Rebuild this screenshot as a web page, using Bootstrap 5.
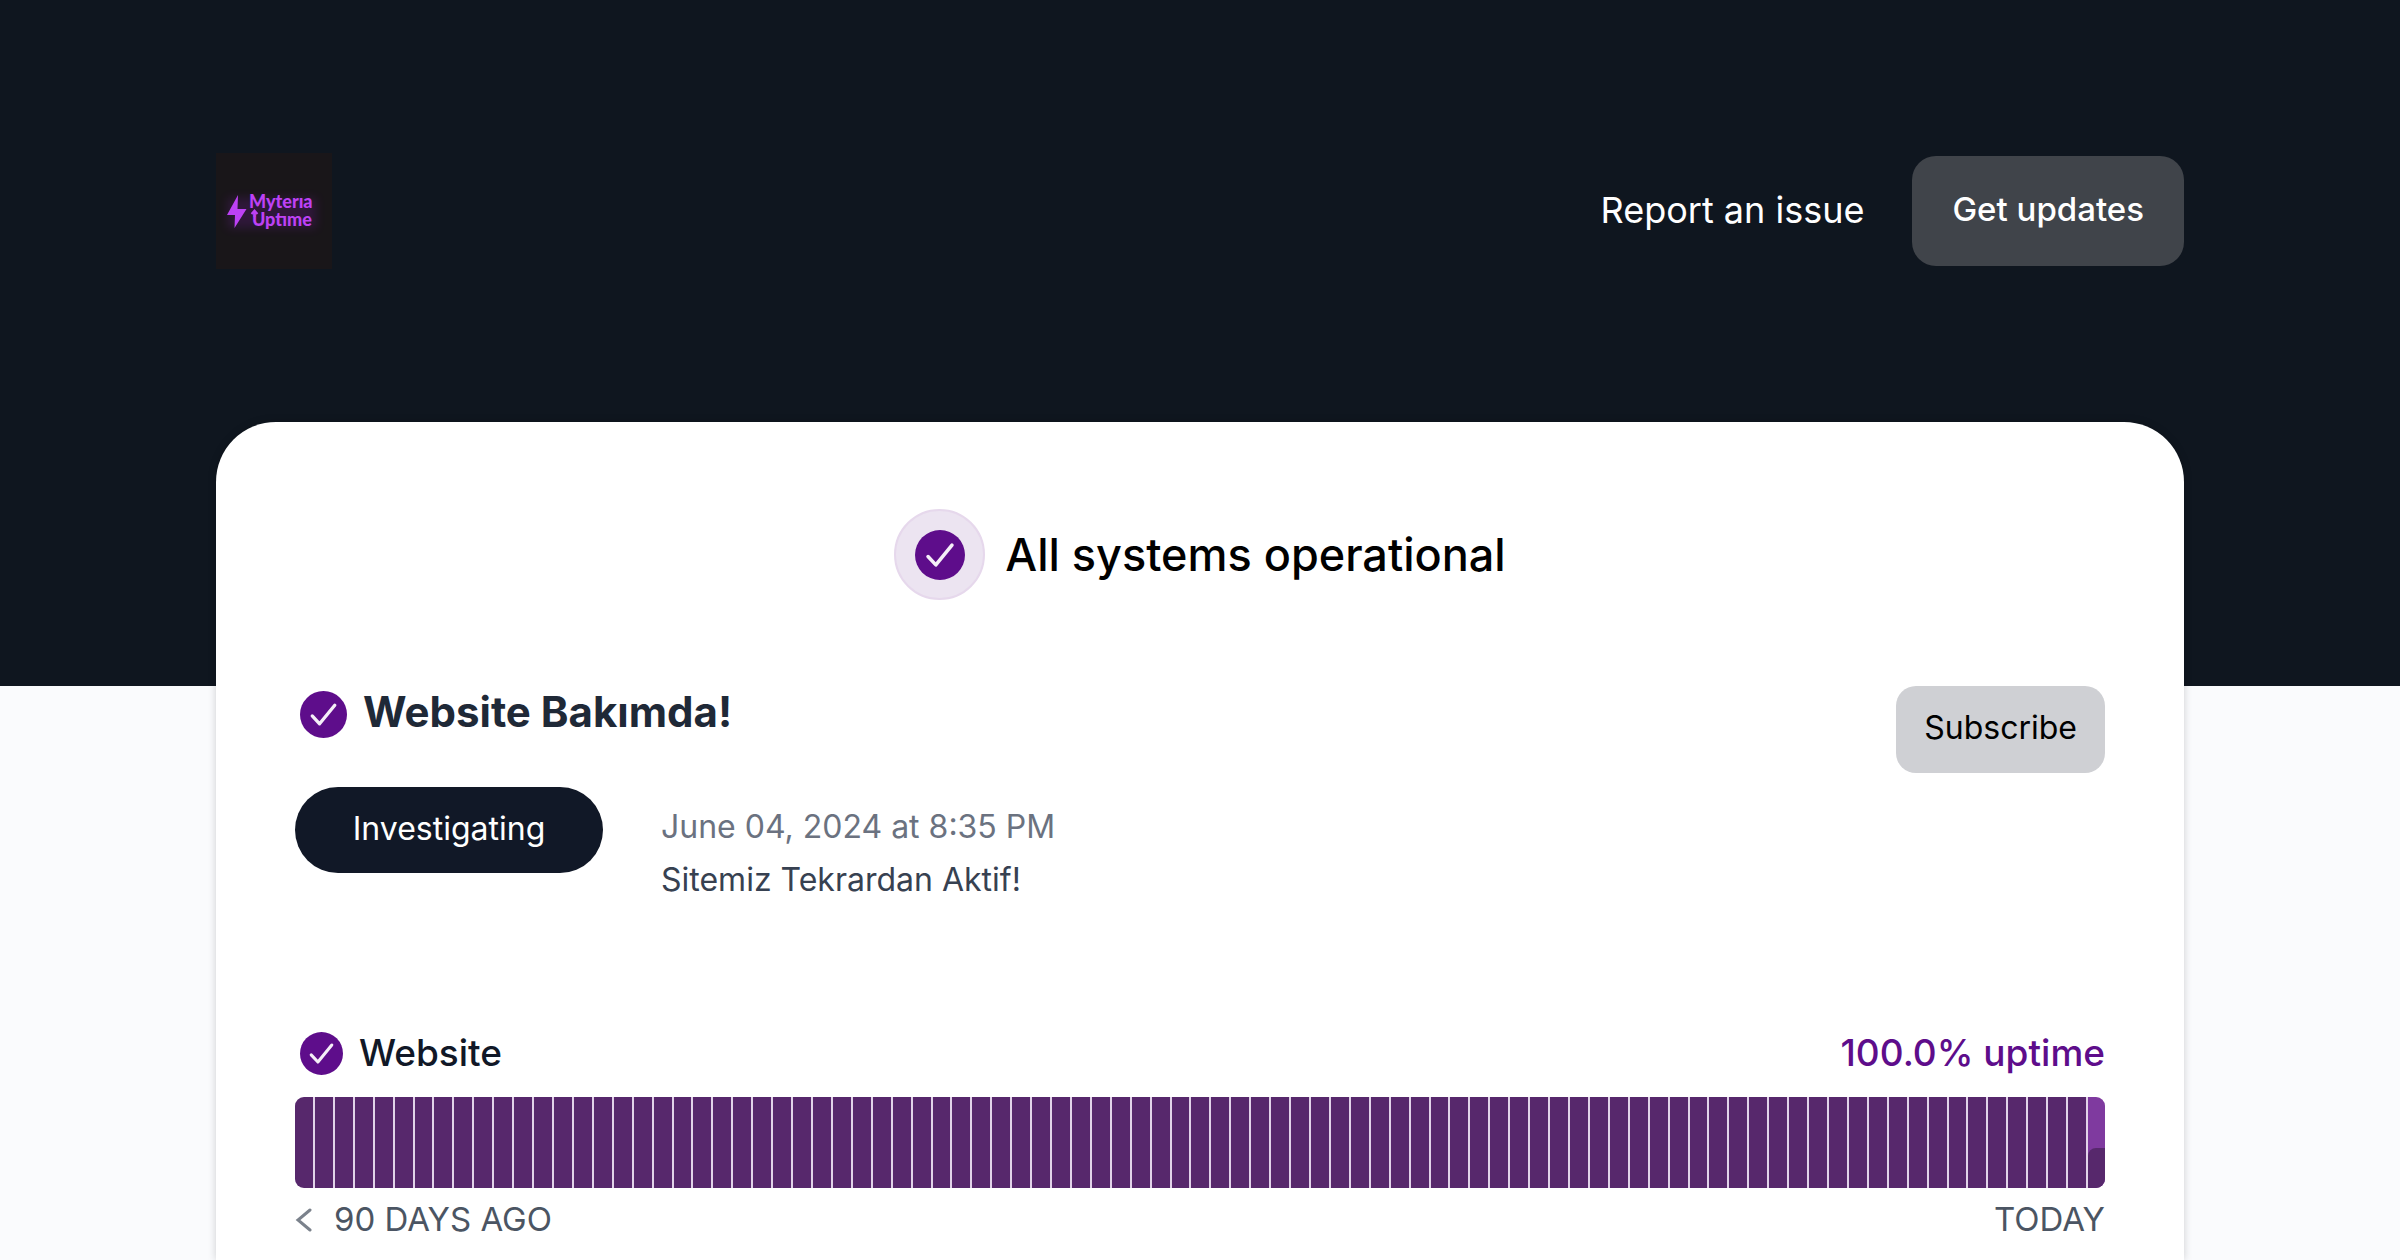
<!DOCTYPE html>
<html lang="en">
<head>
<meta charset="utf-8">
<meta name="viewport" content="width=device-width, initial-scale=1">
<title>Myteria Uptime status</title>
<link href="https://cdn.jsdelivr.net/npm/bootstrap@5.3.0/dist/css/bootstrap.min.css" rel="stylesheet">
<style>
body{font-family:Inter,"Liberation Sans",sans-serif;background:linear-gradient(#0f161f 686px,#fafbfd 686px) no-repeat #fafbfd;color:#111827;font-size:32px;line-height:53px}
.page-wrap{width:82%}
.site-head{padding-top:153px;height:422px}
.brand-logo{width:116px;height:116px;display:block}
.site-nav{padding-top:3px}
.report-link{font-size:36px;color:#fff;padding-bottom:1px}
.btn-updates{height:110px;padding:0 40px 3px;border-radius:24px;background:#40444a;color:#fff;font-size:33px;font-weight:500;border:0}
.status-panel{background:#fff;border-radius:60px 60px 0 0;padding:87px 79px 0;box-shadow:0 0 8px rgba(0,0,0,.18)}
.halo{width:91px;height:91px;background:#ece4f1;border:2px solid #e6d8ec}
.overall-title{font-size:45px;font-weight:500;line-height:56px;color:#000;margin-left:20px}
.incident{margin-top:86px}
.incident-title{font-size:42px;font-weight:700;line-height:52px;color:#1f2937}
.check-row{padding-left:5px}
.btn-subscribe{height:87px;padding:0 28px 4px;border-radius:20px;background:#cfd0d4;color:#000;font-size:32px;border:0}
.incident-row{margin-top:49px}
.phase{width:308px;height:86px;background:#111827;color:#fff;padding-bottom:4px}
.update-body{margin-left:58px;padding-top:13px}
.update-time{color:#6b7280}
.update-text{color:#374151}
.monitor{margin-top:121px}
.monitor-head{margin-bottom:18px}
.monitor-name{font-size:37px;font-weight:500;line-height:52px}
.monitor-uptime{font-size:37px;font-weight:500;line-height:52px;color:#5e0d8b}
.day-strip{height:91px;gap:2px;background:#e2d3e9;border-radius:9px}
.day{flex:18 1 0;background:#57286c}
.day-today{flex-grow:17;background:#7f3a9f}
.day-part{height:40px;background:#57286c;border-radius:8px 0 0 0}
.range{color:#4b5563;font-size:33px;padding-top:5px}
.range-start{gap:21px}
</style>
<script src="https://cdn.jsdelivr.net/npm/bootstrap@5.3.0/dist/js/bootstrap.bundle.min.js"></script>
</head>
<body>
<svg class="d-none" aria-hidden="true">
  <symbol id="tick" viewBox="0 0 48 48"><circle cx="24" cy="24" r="24" fill="#5e0d8b"/><path d="M12.500 25.500L20 33.500L35.500 14.500" fill="none" stroke="#f5eef8" stroke-width="3.400" stroke-linecap="round" stroke-linejoin="round"/></symbol>
</svg>
<div class="page-wrap mx-auto min-vh-100 d-flex flex-column">
  <header class="site-head d-flex justify-content-between align-items-start">
    <a href="#" aria-label="Myteria Uptime">
      <svg class="brand-logo" viewBox="0 0 116 116">
        <defs><filter id="glow" x="-30%" y="-30%" width="160%" height="160%"><feGaussianBlur stdDeviation="5"/></filter></defs>
        <rect width="116" height="116" fill="#191619"/>
        <path d="M12 45h88v30H12z" fill="#7d1fae" opacity=".22" filter="url(#glow)"/>
        <path d="M22 42L11 62H19L18.500 75L30.500 56H21.500Z" fill="#bd41f5"/>
        <g fill="#bd41f5" font-family="Lato,sans-serif" font-weight="900" font-size="18">
          <text x="33" y="55">Myterıa</text><text x="36" y="73">Uptıme</text>
        </g>
        <path d="M38.500 64V58M35.500 61L38.500 57.500L41.500 61" fill="none" stroke="#bd41f5" stroke-width="2"/>
      </svg>
    </a>
    <nav class="site-nav d-flex align-items-center">
      <a class="report-link text-decoration-none me-5" href="#">Report an issue</a>
      <button class="btn btn-updates" type="button">Get updates</button>
    </nav>
  </header>
  <main class="status-panel flex-grow-1">
    <div class="d-flex justify-content-center align-items-center">
      <span class="halo rounded-circle d-flex align-items-center justify-content-center"><svg width="50" height="50"><use href="#tick"/></svg></span>
      <h1 class="overall-title mb-0">All systems operational</h1>
    </div>
    <section class="incident d-flex justify-content-between align-items-start">
      <div>
        <div class="check-row d-flex align-items-center">
          <svg width="47" height="47" class="mt-1"><use href="#tick"/></svg>
          <h2 class="incident-title mb-0 ms-3">Website Bakımda!</h2>
        </div>
        <div class="incident-row d-flex">
          <span class="phase rounded-pill d-flex align-items-center justify-content-center">Investigating</span>
          <div class="update-body">
            <div class="update-time">June 04, 2024 at 8:35 PM</div>
            <div class="update-text">Sitemiz Tekrardan Aktif!</div>
          </div>
        </div>
      </div>
      <button class="btn btn-subscribe" type="button">Subscribe</button>
    </section>
    <section class="monitor">
      <div class="monitor-head d-flex justify-content-between">
        <div class="check-row d-flex align-items-center">
          <svg width="43" height="43"><use href="#tick"/></svg>
          <h3 class="monitor-name mb-0 ms-3">Website</h3>
        </div>
        <div class="monitor-uptime">100.0% uptime</div>
      </div>
      <div class="day-strip d-flex overflow-hidden" id="days"></div>
      <div class="range d-flex justify-content-between">
        <div class="range-start d-flex align-items-center">
          <svg width="18" height="24" viewBox="0 0 18 24"><path d="M15 2L3 12L15 22" fill="none" stroke="#7b828c" stroke-width="3" stroke-linecap="round"/></svg>
          <span>90 DAYS AGO</span>
        </div>
        <div>TODAY</div>
      </div>
    </section>
  </main>
</div>
<script>
const strip = document.getElementById('days');
for (let i = 0; i < 90; i++) {
  const d = document.createElement('div');
  d.className = 'day';
  strip.append(d);
}
strip.insertAdjacentHTML('beforeend', '<div class="day day-today d-flex align-items-end"><div class="day-part w-100"></div></div>');
</script>
</body>
</html>
